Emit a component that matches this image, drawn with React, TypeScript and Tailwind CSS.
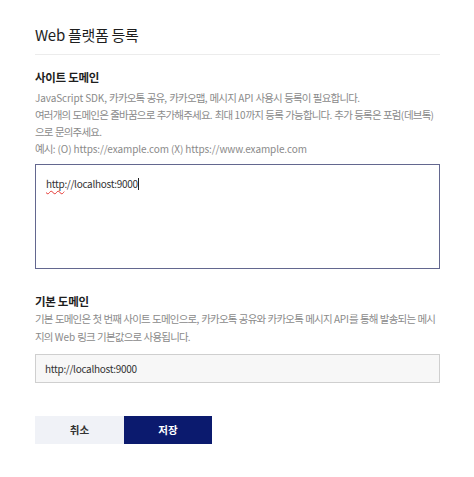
import React from "react";

function T({ text }: { text: string }) {
  const parts = text.split(/([\u3131-\uD79D]+)/);
  return (
    <>
      {parts.map((p, i) =>
        /[\u3131-\uD79D]/.test(p) ? (
          <span key={i} className="text-[10.5px] tracking-[-0.8px]">{p}</span>
        ) : (
          <span key={i} className="tracking-[-0.1px]">{p}</span>
        )
      )}
    </>
  );
}

export default function App() {
  const font = { fontFamily: '"Noto Sans CJK KR", "Noto Sans", sans-serif' };
  return (
    <div className="w-[474px] h-[477px] bg-white" style={font}>
      <div className="pl-[35px] pr-[34px] pt-[24px]">
        <h1 className="text-[15px] leading-[22px] text-[#1e1e1e] tracking-[-0.3px]">Web 플랫폼 등록</h1>
        <div className="mt-[8px] h-px bg-[#ececec]" />

        <h2 className="mt-[13px] text-[11.5px] leading-[18px] font-bold text-[#1e1e1e] tracking-[-0.3px]">사이트 도메인</h2>
        <div className="mt-[3px] text-[10px] leading-[17px] text-[#8a8a8a]">
          <p><T text="JavaScript SDK, 카카오톡 공유, 카카오맵, 메시지 API 사용시 등록이 필요합니다." /></p>
          <p><T text="여러개의 도메인은 줄바꿈으로 추가해주세요. 최대 10까지 등록 가능합니다. 추가 등록은 포럼(데브톡)으로 문의주세요." /></p>
          <p><T text="예시: (O) https://example.com (X) https://www.example.com" /></p>
        </div>

        <div className="mt-[7px] h-[105px] border border-[#63678f] px-[10px] pt-[10px] text-[10px] leading-[18px] text-[#333] tracking-[-0.3px]">
          <span className="underline decoration-wavy decoration-[#e53935] decoration-1 underline-offset-2">http</span>
          <span>://localhost:9000</span>
          <span className="inline-block w-px h-[12px] bg-[#222] align-[-2px]" />
        </div>

        <h2 className="mt-[23px] text-[11.5px] leading-[18px] font-bold text-[#1e1e1e] tracking-[-0.3px]">기본 도메인</h2>
        <div className="mt-0 text-[10px] leading-[18px] text-[#8a8a8a]">
          <p><T text="기본 도메인은 첫 번째 사이트 도메인으로, 카카오톡 공유와 카카오톡 메시지 API를 통해 발송되는 메시지의 Web 링크 기본값으로 사용됩니다." /></p>
        </div>

        <div className="mt-[8px] h-[29px] border border-[#cfcfcf] bg-[#f7f7f7] px-[9px] flex items-center text-[10px] text-[#333] tracking-[-0.3px]">
          http://localhost:9000
        </div>

        <div className="mt-[33px] flex">
          <button className="w-[89px] h-[28px] bg-[#f0f2f7] text-[10.5px] font-bold text-[#333]">취소</button>
          <button className="w-[88px] h-[28px] bg-[#0b1a6e] text-[10.5px] font-bold text-white">저장</button>
        </div>
      </div>
    </div>
  );
}
